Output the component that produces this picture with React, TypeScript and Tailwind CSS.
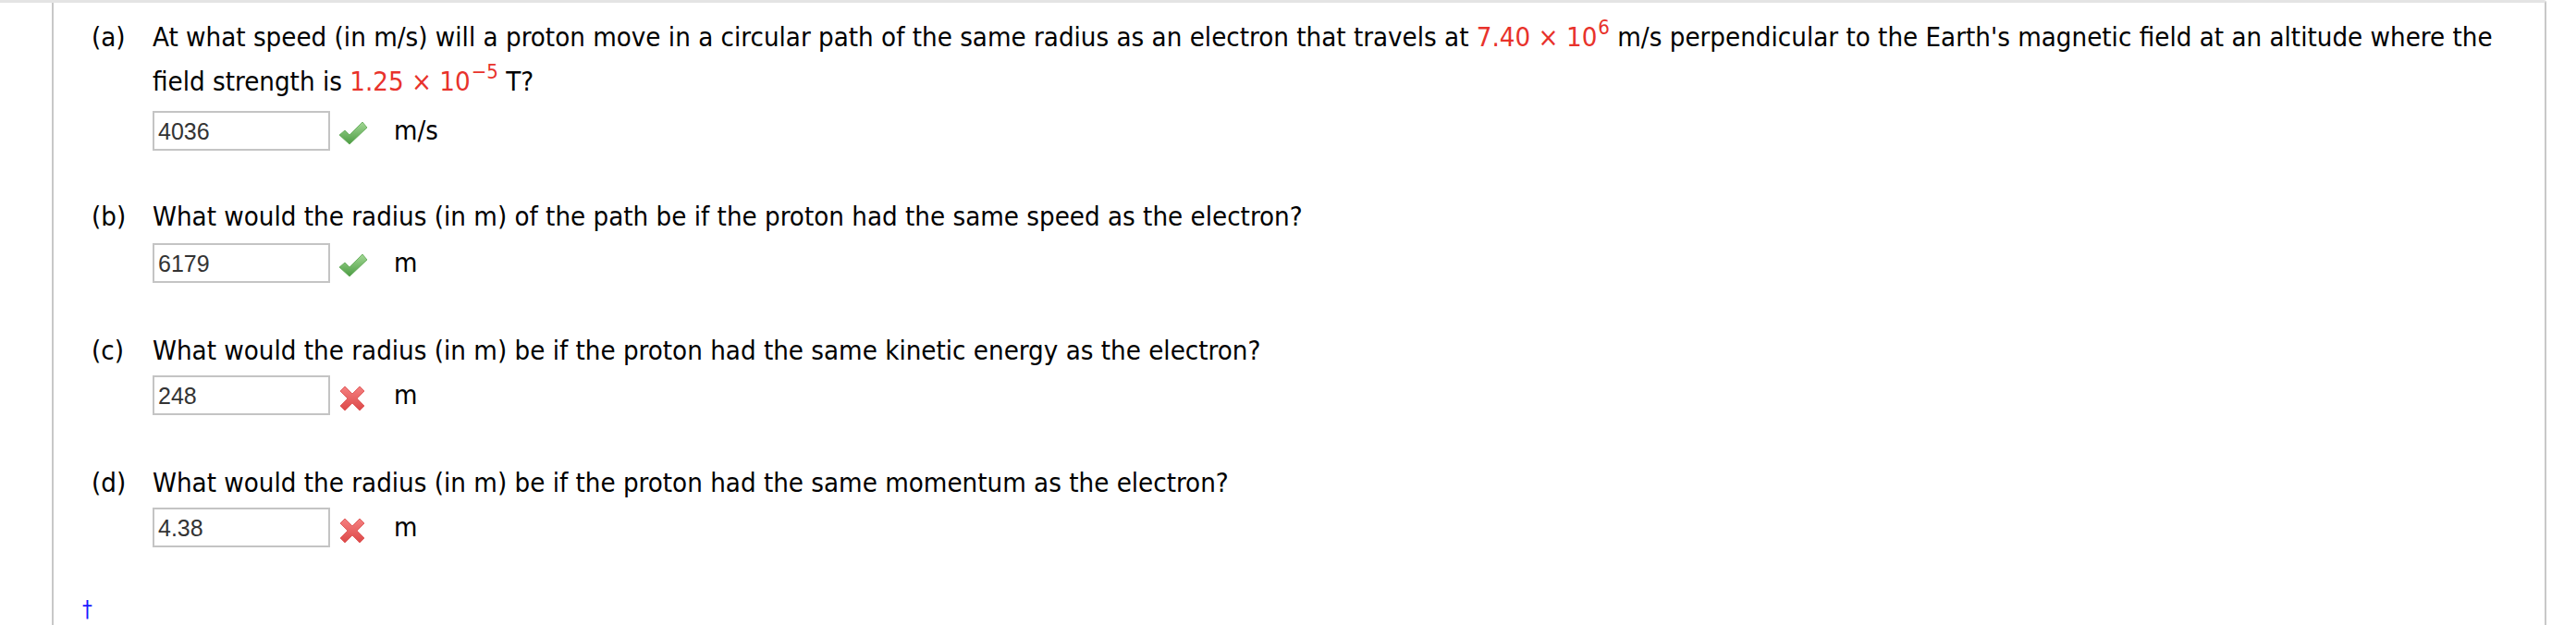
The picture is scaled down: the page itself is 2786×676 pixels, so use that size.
import React from "react";

const qFont = { fontFamily: '"DejaVu Sans Condensed", "DejaVu Sans", sans-serif' };

function CheckIcon() {
  return (
    <svg width="32" height="26" viewBox="0 0 32 26" className="mt-[11px]">
      <defs>
        <linearGradient id="chk" x1="0" y1="0" x2="0" y2="1">
          <stop offset="0" stopColor="#a3d895" />
          <stop offset="1" stopColor="#4c9c43" />
        </linearGradient>
      </defs>
      <path
        d="M1 15 L7 10 L12 15 L26 1 L31 7 L12 25 Z"
        fill="url(#chk)"
        stroke="#5aa650"
        strokeWidth="0.8"
        strokeLinejoin="round"
      />
    </svg>
  );
}

function CrossIcon() {
  return (
    <svg width="30" height="30" viewBox="0 0 30 30" className="mt-[10px]">
      <defs>
        <linearGradient id="crs" x1="0" y1="0" x2="0" y2="1">
          <stop offset="0" stopColor="#f58080" />
          <stop offset="1" stopColor="#dc4848" />
        </linearGradient>
      </defs>
      <path
        d="M2 7 L7 2 L15 10 L23 2 L28 7 L20 15 L28 23 L23 28 L15 20 L7 28 L2 23 L10 15 Z"
        fill="url(#crs)"
        stroke="#e06060"
        strokeWidth="1"
        strokeLinejoin="round"
      />
    </svg>
  );
}

function Red({ children }: { children: React.ReactNode }) {
  return <span className="text-[#e8322b]">{children}</span>;
}

function Sup({ children }: { children: React.ReactNode }) {
  return <span className="relative top-[-13px] ml-[1px] text-[22px] leading-none">{children}</span>;
}

function AnswerRow({ value, correct, unit, className }: { value: string; correct: boolean; unit: string; className?: string }) {
  return (
    <div className={"flex items-start " + (className || "")}>
      <div
        className="flex h-[43px] w-[192px] items-center border-2 border-[#c4c4c4] pl-[4px] text-[25px] text-[#333]"
        style={{ fontFamily: '"Liberation Sans", Arial, sans-serif' }}
      >
        {value}
      </div>
      <div className="ml-[9px] w-[31px]">{correct ? <CheckIcon /> : <CrossIcon />}</div>
      <div className="ml-[29px] text-[29px] leading-[42px]">{unit}</div>
    </div>
  );
}

function Part({ label, children, answer }: { label: string; children: React.ReactNode; answer: React.ReactNode }) {
  return (
    <div className="flex">
      <div className="w-[66px] shrink-0">{label}</div>
      <div className="flex-1">
        <div>{children}</div>
        {answer}
      </div>
    </div>
  );
}

export default function App() {
  return (
    <div className="h-[676px] w-[2786px] overflow-hidden bg-white text-black" style={qFont}>
      <div className="h-[676px] w-[2754px] rounded-tr-[3px] border-t-[3px] border-r-2 border-t-[#e4e4e4] border-r-[#c8c8c8]">
        <div className="ml-[56px] h-full border-l-2 border-[#c8c8c8] pl-[41px] pt-[13px] text-[29.2px] leading-[48px]">
          <Part
            label="(a)"
            answer={<AnswerRow value="4036" correct unit="m/s" className="mt-[8px]" />}
          >
            At what speed (in m/s) will a proton move in a circular path of the same radius as an electron that travels at{" "}
            <Red>
              7.40 × 10<Sup>6</Sup>
            </Red>{" "}
            m/s perpendicular to the Earth's magnetic field at an altitude where the
            <br />
            field strength is{" "}
            <Red>
              1.25 × 10<Sup>−5</Sup>
            </Red>{" "}
            T?
          </Part>

          <div className="mt-[47px]">
            <Part label="(b)" answer={<AnswerRow value="6179" correct unit="m" className="mt-[5px]" />}>
              What would the radius (in m) of the path be if the proton had the same speed as the electron?
            </Part>
          </div>

          <div className="mt-[49px]">
            <Part label="(c)" answer={<AnswerRow value="248" correct={false} unit="m" className="mt-[3px]" />}>
              What would the radius (in m) be if the proton had the same kinetic energy as the electron?
            </Part>
          </div>

          <div className="mt-[49px]">
            <Part label="(d)" answer={<AnswerRow value="4.38" correct={false} unit="m" className="mt-[3px]" />}>
              What would the radius (in m) be if the proton had the same momentum as the electron?
            </Part>
          </div>

          <div className="-ml-[10px] mt-[52px] text-[24px] leading-[30px] text-[#1a1aff]">†</div>
        </div>
      </div>
    </div>
  );
}
